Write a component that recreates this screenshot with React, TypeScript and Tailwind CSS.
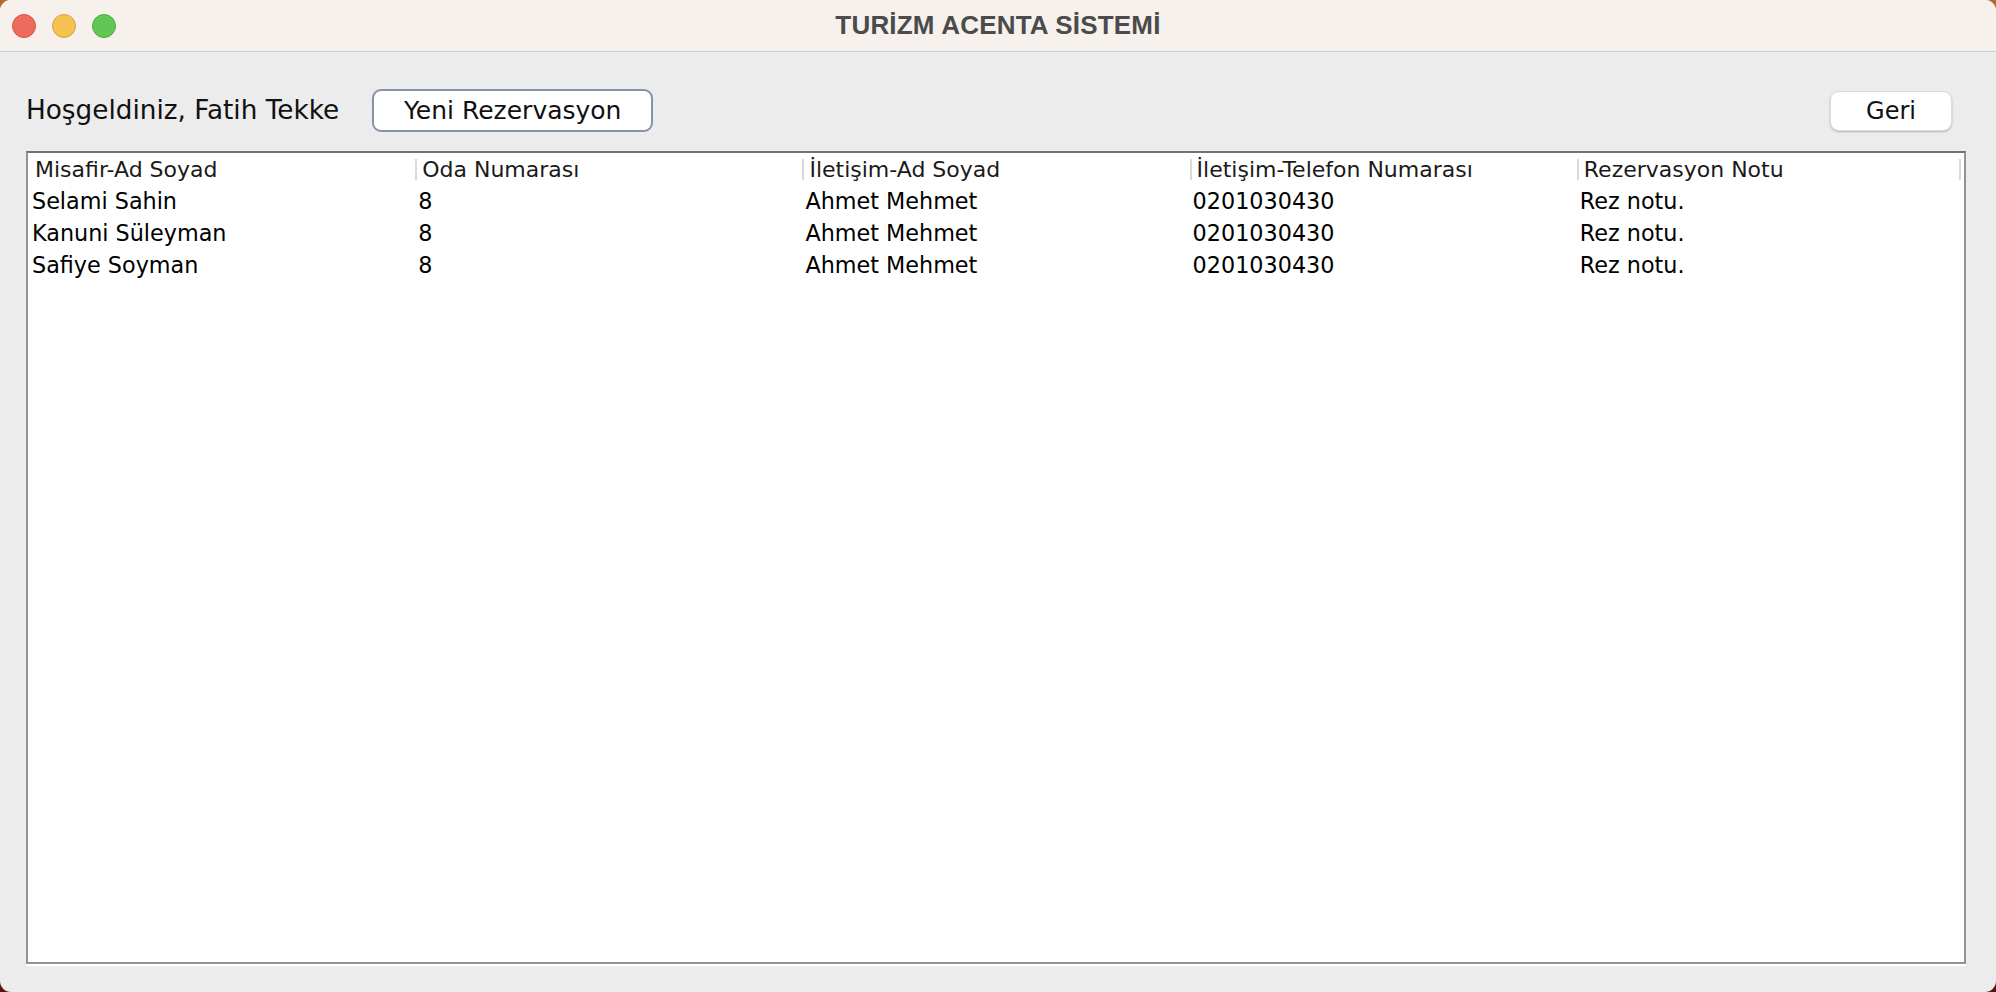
import React from 'react';

type Rezervasyon = {
  misafir: string;
  oda: string;
  iletisimAd: string;
  telefon: string;
  not: string;
};

const columns = ['Misafir-Ad Soyad', 'Oda Numarası', 'İletişim-Ad Soyad', 'İletişim-Telefon Numarası', 'Rezervasyon Notu'];

const rows: Rezervasyon[] = [
  { misafir: 'Selami Sahin', oda: '8', iletisimAd: 'Ahmet Mehmet', telefon: '0201030430', not: 'Rez notu.' },
  { misafir: 'Kanuni Süleyman', oda: '8', iletisimAd: 'Ahmet Mehmet', telefon: '0201030430', not: 'Rez notu.' },
  { misafir: 'Safiye Soyman', oda: '8', iletisimAd: 'Ahmet Mehmet', telefon: '0201030430', not: 'Rez notu.' },
];

const TrafficLights = () => (
  <div className="flex items-center gap-[16px] pl-[12px]">
    <span className="h-[24px] w-[24px] rounded-full border border-[#d8574c] bg-[#ee6a5f]" />
    <span className="h-[24px] w-[24px] rounded-full border border-[#d9a43c] bg-[#f6c150]" />
    <span className="h-[24px] w-[24px] rounded-full border border-[#4fa843] bg-[#62c655]" />
  </div>
);

export default function App() {
  return (
    <div className="h-[992px] w-[1996px] bg-gradient-to-b from-[#b8662a] to-[#5a1410]">
      <div className="flex h-full flex-col overflow-hidden rounded-[11px] bg-[#ececec] font-['DejaVu_Sans',sans-serif]">
        {/* title bar */}
        <div className="grid h-[52px] shrink-0 grid-cols-[1fr_auto_1fr] items-center border-b border-[#d2cdc9] bg-[#f6f1ed]">
          <TrafficLights />
          <h1 className="font-['Liberation_Sans',sans-serif] text-[26px] font-bold tracking-[0.2px] text-[#4b4b4b]">
            TURİZM ACENTA SİSTEMİ
          </h1>
          <div />
        </div>

        <div className="flex flex-1 flex-col pb-[28px] pl-[26px] pr-[30px]">
          {/* top bar */}
          <div className="mt-[37px] flex h-[43px] items-center">
            <span className="text-[26.3px] leading-none text-[#111]">Hoşgeldiniz, Fatih Tekke</span>
            <button
              type="button"
              className="ml-[33px] flex h-[43px] w-[281px] items-center justify-center rounded-[9px] border-2 border-[#8493a8] bg-white text-[25px] text-[#111]"
            >
              Yeni Rezervasyon
            </button>
            <button
              type="button"
              className="ml-auto mr-[14px] flex h-[40px] w-[122px] items-center justify-center rounded-[9px] border border-[#dcdcdc] bg-white text-[24px] text-[#111] shadow-[0_1px_2px_rgba(0,0,0,0.25)]"
            >
              Geri
            </button>
          </div>

          {/* table */}
          <div className="mt-[19px] flex-1 border-2 border-[#939393] border-t-[#737373] bg-white shadow-[0_2px_0_#ffffff]">
            <div className="grid h-[32px] grid-cols-5 text-[22px] text-[#1a1a1a]">
              {columns.map((col, i) => (
                <div key={col} className="flex items-center">
                  {i === 0 ? (
                    <span className="pl-[7px]">{col}</span>
                  ) : (
                    <>
                      <span className="h-[21px] w-[2px] bg-[#dadada]" />
                      <span className="ml-[5px]">{col}</span>
                    </>
                  )}
                  {i === columns.length - 1 && <span className="ml-auto mr-[3px] h-[21px] w-[2px] bg-[#dadada]" />}
                </div>
              ))}
            </div>
            {rows.map((r) => (
              <div key={r.misafir} className="grid h-[32px] grid-cols-5 items-center text-[22.3px] leading-[32px] text-black">
                <span className="pl-[4px]">{r.misafir}</span>
                <span className="pl-[3px]">{r.oda}</span>
                <span className="pl-[3px]">{r.iletisimAd}</span>
                <span className="pl-[3px]">{r.telefon}</span>
                <span className="pl-[3px]">{r.not}</span>
              </div>
            ))}
          </div>
        </div>
      </div>
    </div>
  );
}
